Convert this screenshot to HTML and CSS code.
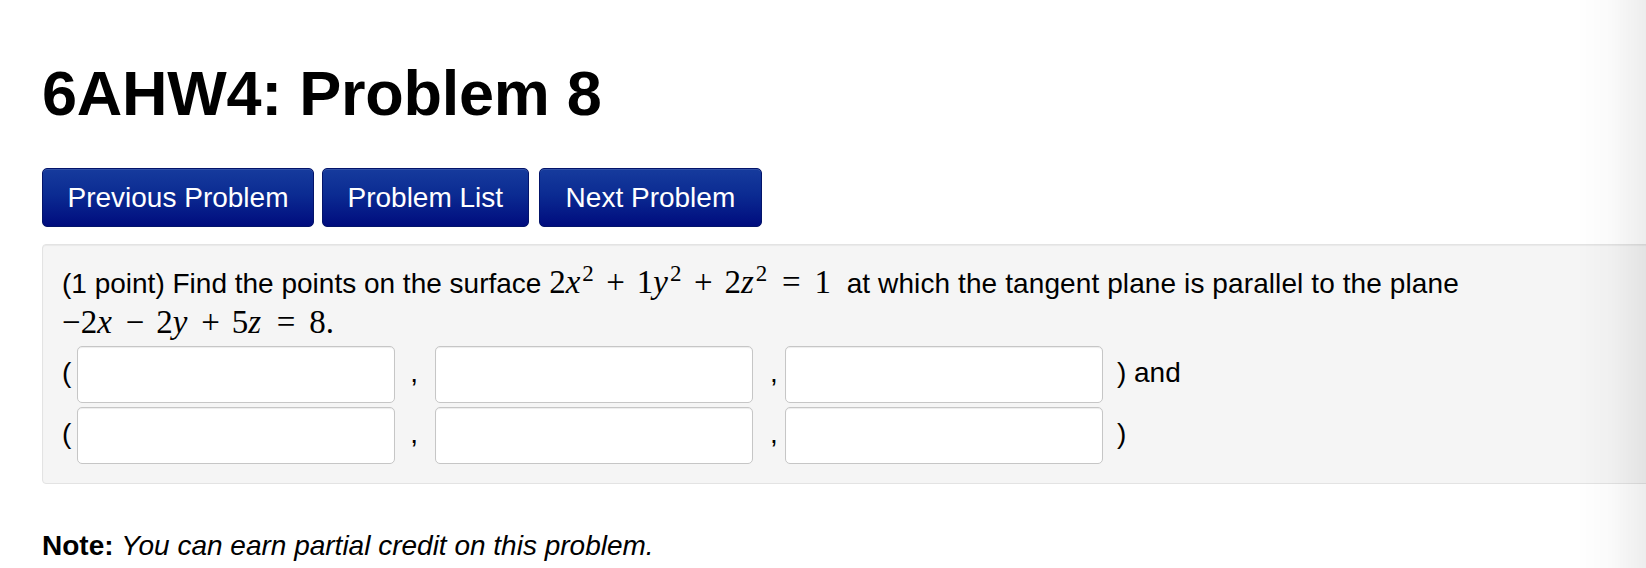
FILE: index.html
```html
<!DOCTYPE html>
<html lang="en">
<head>
<meta charset="utf-8">
<title>6AHW4: Problem 8</title>
<link rel="stylesheet" href="styles.css">
</head>
<body>
<div class="page">
  <h1 class="title">6AHW4: Problem 8</h1>
  <div class="nav">
    <a class="btn btn-prev" href="#">Previous Problem</a>
    <a class="btn btn-list" href="#">Problem List</a>
    <a class="btn btn-next" href="#">Next Problem</a>
  </div>
  <div class="well">
    <div class="problem">
      (1 point) Find the points on the surface <span class="math math-surface"><span class="num">2</span><span class="var">x</span><span class="sup">2</span><span class="bin">+</span><span class="num">1</span><span class="var">y</span><span class="sup">2</span><span class="bin">+</span><span class="num">2</span><span class="var">z</span><span class="sup">2</span><span class="rel">=</span><span class="num">1</span></span> <span class="tail">at which the tangent plane is parallel to the plane</span><br>
      <span class="math"><span class="op">−</span><span class="num">2</span><span class="var">x</span><span class="bin">−</span><span class="num">2</span><span class="var">y</span><span class="bin">+</span><span class="num">5</span><span class="var">z</span><span class="rel">=</span><span class="num">8</span>.</span>
    </div>
    <div class="answer-row">
      <span class="txt">(</span>
      <input class="ans ans-first" type="text">
      <span class="txt sep sep-a">,</span>
      <input class="ans" type="text">
      <span class="txt sep sep-b">,</span>
      <input class="ans" type="text">
      <span class="txt close">) and</span>
    </div>
    <div class="answer-row">
      <span class="txt">(</span>
      <input class="ans ans-first" type="text">
      <span class="txt sep sep-a">,</span>
      <input class="ans" type="text">
      <span class="txt sep sep-b">,</span>
      <input class="ans" type="text">
      <span class="txt close">)</span>
    </div>
  </div>
  <p class="note"><b>Note:</b> <i>You can earn partial credit on this problem.</i></p>
</div>
<div class="edge-shade"></div>
</body>
</html>
```

FILE: styles.css
```css
html, body {
  margin: 0;
  padding: 0;
  background: #ffffff;
  overflow: hidden;
}

body {
  font-family: "Liberation Sans", Arial, Helvetica, sans-serif;
  color: #000000;
  font-size: 28px;
}

.page {
  padding: 55px 0 0 42px;
}

.title {
  margin: 0;
  font-size: 63px;
  line-height: 76px;
  font-weight: bold;
  letter-spacing: -0.25px;
}

.nav {
  display: flex;
  margin-top: 37px;
}

.btn {
  display: block;
  box-sizing: border-box;
  height: 59px;
  line-height: 57px;
  padding: 0 24.5px;
  color: #ffffff;
  text-decoration: none;
  font-size: 28px;
  border: 1px solid #03146a;
  border-radius: 5px;
  background: linear-gradient(to bottom, #163b9d 0%, #0b2b92 45%, #000c7e 100%);
  box-shadow: inset 0 1px 0 rgba(255,255,255,0.12);
}

.btn-list {
  margin-left: 8px;
}

.btn-next {
  margin-left: 10px;
  padding: 0 26px;
}

.well {
  margin-top: 17px;
  width: 1700px;
  box-sizing: border-box;
  background: #f5f5f5;
  border: 1px solid #e3e3e3;
  border-radius: 4px;
  box-shadow: inset 0 1px 1px rgba(0,0,0,0.05);
  padding: 19px 18px 17px 19px;
}

.problem {
  line-height: 40px;
}

.math {
  font-family: "Liberation Serif", "Times New Roman", serif;
  font-size: 33px;
  line-height: 1;
  white-space: nowrap;
}

.math-surface {
  margin-right: 8px;
}

.tail {
  letter-spacing: 0.1px;
}

.var {
  font-style: italic;
  padding-right: 0.06em;
}

.sup {
  font-size: 23px;
  line-height: 0;
  vertical-align: 12px;
  padding-right: 0.03em;
}

.bin {
  margin: 0 0.36em;
}

.rel {
  margin: 0 0.42em;
}

.op {
  margin-right: 0;
}

.answer-row {
  display: flex;
  align-items: center;
  height: 61px;
}

.txt {
  line-height: 36px;
  margin-bottom: 4px;
  white-space: nowrap;
}

.ans {
  box-sizing: border-box;
  width: 318px;
  height: 57px;
  margin: 0;
  background: #ffffff;
  border: 1px solid #c6c6c6;
  border-radius: 5px;
  box-shadow: inset 0 1px 1px rgba(0,0,0,0.075);
  font-size: 28px;
  padding: 4px 8px;
}

.ans-first {
  margin-left: 6px;
}

.sep-a {
  margin-left: 15px;
  margin-right: 17px;
}

.sep-b {
  margin-left: 17px;
  margin-right: 7px;
}

.close {
  margin-left: 14px;
}

.note {
  margin: 42px 0 0 0;
  line-height: 40px;
}

.edge-shade {
  position: fixed;
  top: 0;
  right: 0;
  width: 70px;
  height: 100%;
  background: linear-gradient(to right, rgba(0,0,0,0) 0%, rgba(0,0,0,0.02) 50%, rgba(0,0,0,0.07) 100%);
  pointer-events: none;
}
```
